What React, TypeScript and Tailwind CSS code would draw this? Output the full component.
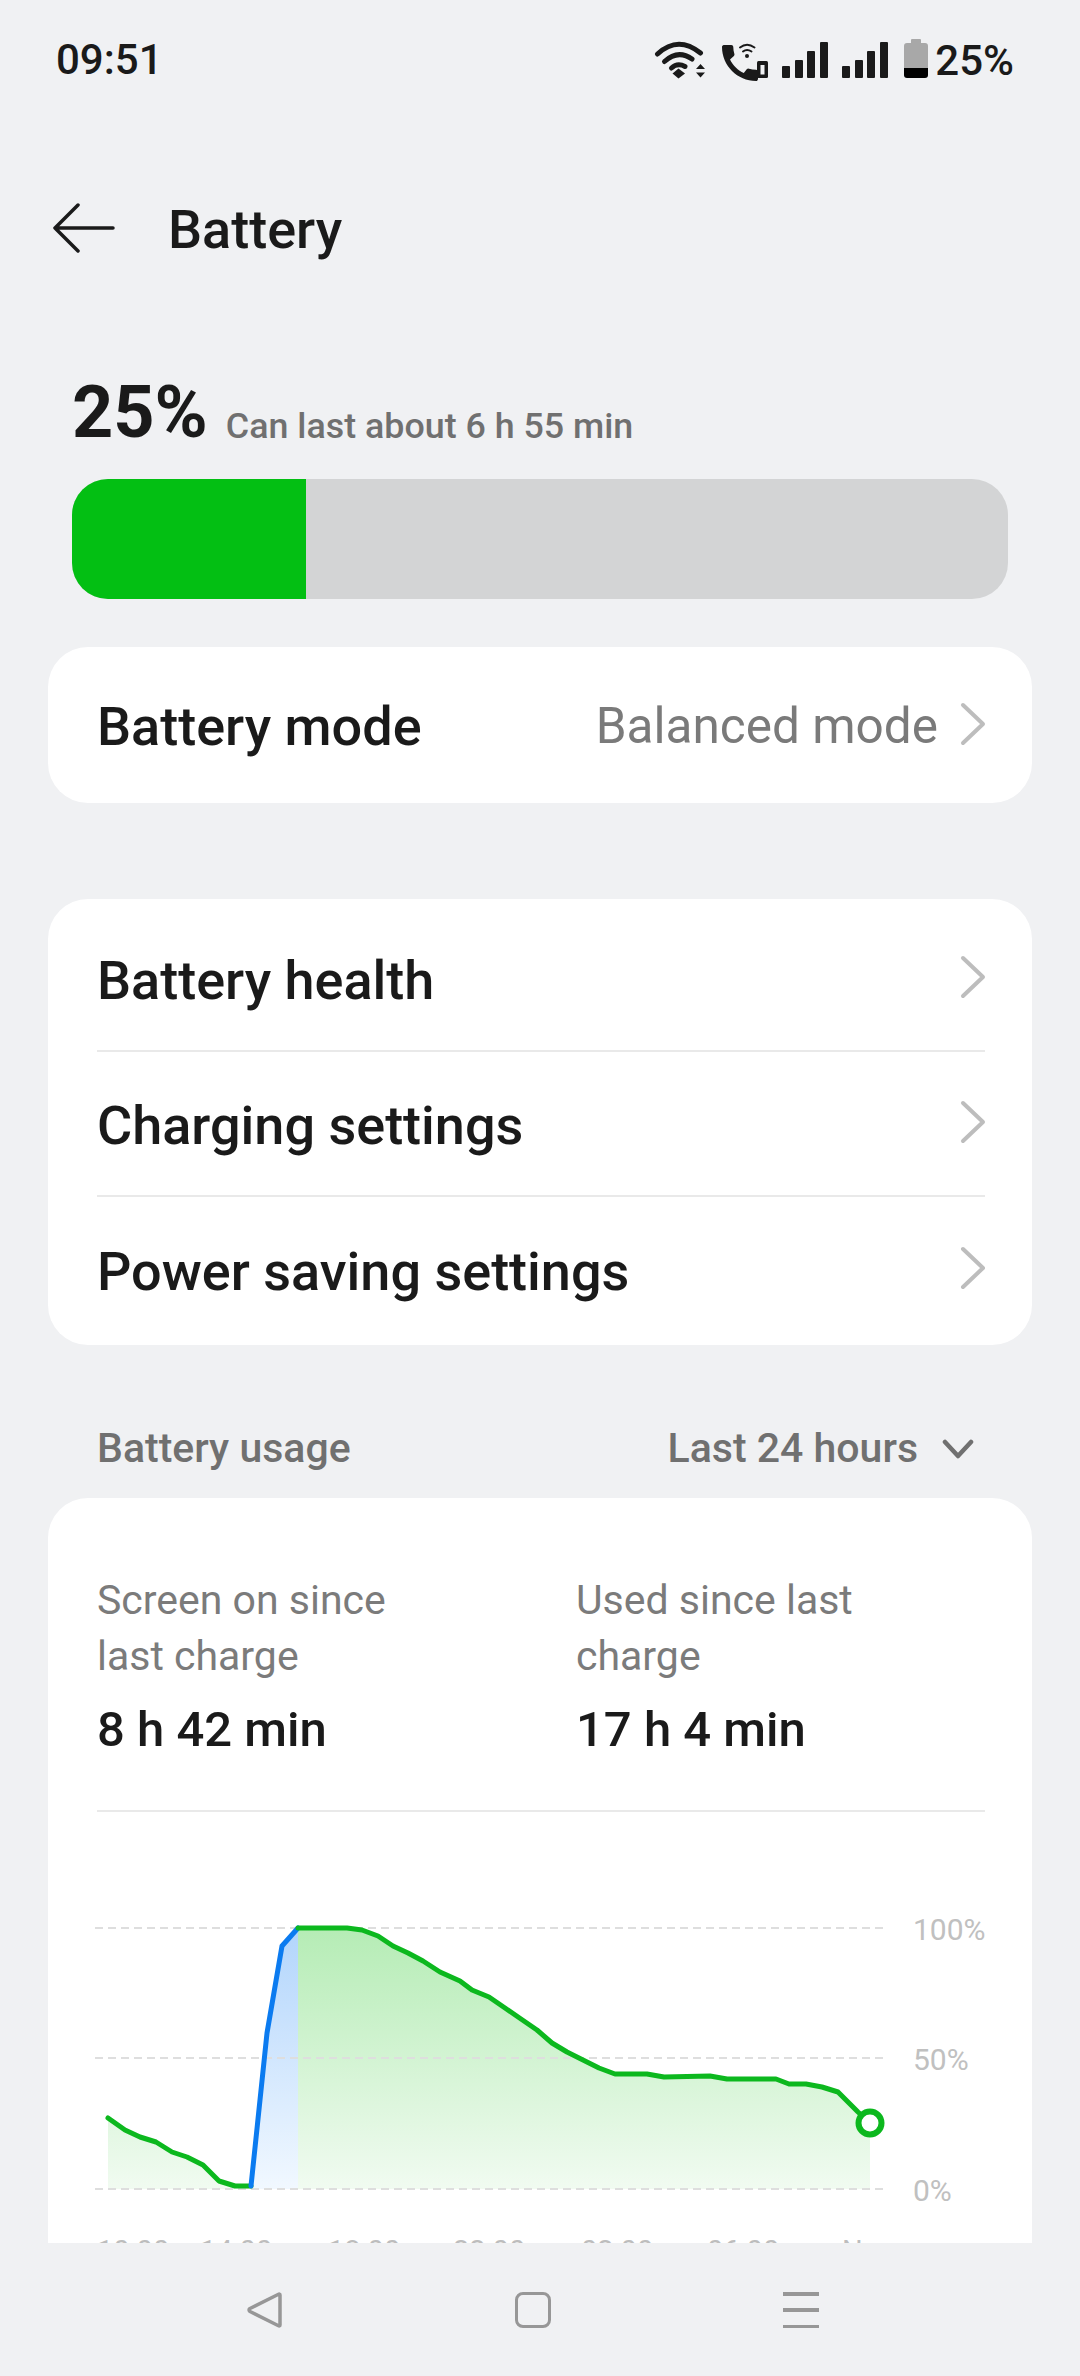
const green = [
  "298,1928", "347,1928", "362,1930", "378,1936", "393,1946", "408,1953", "423,1961", "440,1972", "460,1981",
  "472,1990", "489,1997", "505,2008", "521,2019", "537,2030", "552,2043", "567,2052", "583,2060", "599,2068",
  "615,2074", "647,2074", "664,2077", "710,2076", "727,2079", "776,2079", "789,2084", "806,2084", "822,2087",
  "838,2092", "858,2112", "870,2123",
].join(" ");
const greenStart = "108,2118 125,2130 140,2137 156,2142 172,2152 187,2157 203,2165 219,2181 235,2186 251,2186";
const blue = "251,2186 267,2033 282,1946 298,1928";

const axisTimes = [
  { label: "10:00", x: 97 },
  { label: "14:00", x: 200 },
  { label: "18:00", x: 328 },
  { label: "22:00", x: 453 },
  { label: "02:00", x: 581 },
  { label: "06:00", x: 707 },
  { label: "Now", x: 842 },
];

function Chevron() {
  return (
    <svg width="26" height="44" viewBox="0 0 26 44" fill="none" className="shrink-0 -mr-[1px] mb-[3px]">
      <path d="M3 3 L23 22 L3 41" stroke="#bdbdbd" strokeWidth="4" strokeLinecap="round" strokeLinejoin="round" />
    </svg>
  );
}

function StatusIcons() {
  return (
    <svg width="280" height="46" viewBox="650 36 280 46" fill="none">
      {/* wifi */}
      <g stroke="#1a1a1a" strokeWidth="5" strokeLinecap="round">
        <path d="M657.5 53 Q678 34 700.5 52" />
        <path d="M664.5 60.5 Q678 48 692 58" />
        <path d="M671.5 67 Q677.5 61.5 685 65.5" />
      </g>
      <path d="M678.5 67.5 L685 72.5 L678.5 77.5 L672.5 72.5 Z" fill="#1a1a1a" />
      <path d="M700.5 63 L705 68 L696 68 Z M700.5 76.5 L705 71.5 L696 71.5 Z" fill="#1a1a1a" />
      {/* call over wifi */}
      <path
        transform="translate(716 38) scale(2)"
        d="M20.01 15.38c-1.23 0-2.42-.2-3.53-.56a.977.977 0 0 0-1.01.24l-1.57 1.97c-2.83-1.35-5.48-3.9-6.89-6.83l1.95-1.66c.27-.28.35-.67.24-1.02-.37-1.11-.56-2.3-.56-3.53 0-.54-.45-.99-.99-.99H4.19C3.65 3 3 3.24 3 3.99 3 13.28 10.73 21 20.01 21c.71 0 .99-.63.99-1.18v-3.45c0-.54-.45-.99-.99-.99z"
        fill="#1a1a1a"
      />
      <g stroke="#1a1a1a" strokeWidth="2" strokeLinecap="round">
        <path d="M740 46.5 Q747 41 754.5 46.5" />
        <path d="M743 50.5 Q747 47.5 751.5 50.5" />
      </g>
      <circle cx="747" cy="55" r="2" fill="#1a1a1a" />
      <rect x="757" y="60" width="11" height="17" rx="1.5" fill="#1a1a1a" />
      <rect x="760.5" y="64" width="4" height="9.5" fill="#f0f1f3" />
      {/* signal */}
      <g fill="#1a1a1a">
        <rect x="782" y="65" width="8" height="12" rx="1" />
        <rect x="795" y="59" width="8" height="18" rx="1" />
        <rect x="807" y="50" width="8" height="27" rx="1" />
        <rect x="820" y="41" width="8" height="36" rx="1" />
        <rect x="842" y="65" width="8" height="12" rx="1" />
        <rect x="855" y="59" width="8" height="18" rx="1" />
        <rect x="867" y="50" width="8" height="27" rx="1" />
        <rect x="880" y="41" width="8" height="36" rx="1" />
      </g>
      {/* battery */}
      <path d="M904 45 a3 3 0 0 1 3 -3 h4 v-3 a1 1 0 0 1 1 -1 h8 a1 1 0 0 1 1 1 v3 h4 a3 3 0 0 1 3 3 v22 h-24 Z" fill="#a8a8a8" />
      <path d="M904 67 h24 v7 a3 3 0 0 1 -3 3 h-18 a3 3 0 0 1 -3 -3 Z" fill="#000" />
    </svg>
  );
}

function Row({ label, border }: { label: string; border?: boolean }) {
  return (
    <div className={`h-[145px] flex items-center justify-between ${border ? "border-b-2 border-[#e9e9e9]" : ""}`}>
      <span className="pt-[3px] text-[54px] font-medium text-[#1a1a1a]">{label}</span>
      <Chevron />
    </div>
  );
}

function UsageChart() {
  return (
    <svg width="984" height="460" viewBox="48 1812 984 460" fill="none" className="block">
      <defs>
        <linearGradient id="greenFill" gradientUnits="userSpaceOnUse" x1="0" y1="1928" x2="0" y2="2189">
          <stop offset="0" stopColor="#b5ecb5" />
          <stop offset="1" stopColor="#f1fbf1" />
        </linearGradient>
        <linearGradient id="blueFill" gradientUnits="userSpaceOnUse" x1="0" y1="1928" x2="0" y2="2189">
          <stop offset="0" stopColor="#b2d5fc" />
          <stop offset="1" stopColor="#f1f8ff" />
        </linearGradient>
      </defs>
      <polygon points={`108,2189 ${greenStart} 251,2189`} fill="url(#greenFill)" />
      <polygon points={`251,2189 ${blue} 298,2189`} fill="url(#blueFill)" />
      <polygon points={`298,2189 ${green} 870,2189`} fill="url(#greenFill)" />
      {[1928, 2058, 2189].map((y) => (
        <line key={y} x1="95" x2="883" y1={y} y2={y} stroke="#dedede" strokeWidth="2" strokeDasharray="8 5" />
      ))}
      <polyline points={greenStart} stroke="#0cb81e" strokeWidth="5" strokeLinejoin="round" strokeLinecap="round" />
      <polyline points={blue} stroke="#0b7bf0" strokeWidth="5" strokeLinejoin="round" strokeLinecap="round" />
      <polyline points={green} stroke="#0cb81e" strokeWidth="5" strokeLinejoin="round" strokeLinecap="round" />
      <circle cx="870" cy="2123" r="11.5" fill="#fff" stroke="#0cb81e" strokeWidth="6" />
      <g fill="#c0c0c0" fontSize="30">
        <text x="913" y="1940">100%</text>
        <text x="913" y="2070">50%</text>
        <text x="913" y="2201">0%</text>
      </g>
      <g fill="#bdbdbd" fontSize="29">
        {axisTimes.map((t) => (
          <text key={t.label} x={t.x} y="2261">{t.label}</text>
        ))}
      </g>
    </svg>
  );
}

export default function App() {
  return (
    <div className="w-[1080px] h-[2376px] flex flex-col overflow-hidden bg-[#f0f1f3] text-[#1a1a1a] [font-family:Roboto,sans-serif]">
      <main className="h-[2243px] overflow-hidden shrink-0">
        <div className="h-[116px] pt-[3px] flex items-center justify-between pl-[56px] pr-[66px]">
          <span className="text-[42px] font-medium">09:51</span>
          <div className="flex items-center gap-[5px]">
            <StatusIcons />
            <span className="pt-[1px] text-[42px] font-medium">25%</span>
          </div>
        </div>

        <div className="h-[224px] flex items-center pl-[53px]">
          <svg width="62" height="50" viewBox="0 0 62 50" fill="none" className="shrink-0">
            <path d="M25 2 L2 25 L25 48 M2 25 H60" stroke="#1a1a1a" strokeWidth="3.5" strokeLinecap="round" strokeLinejoin="round" />
          </svg>
          <h1 className="ml-[53px] pt-[2px] text-[54px] font-medium">Battery</h1>
        </div>

        <div className="mt-[37px] px-[72px]">
          <div className="flex items-end gap-[18px]">
            <span className="text-[72px] leading-none font-bold">25%</span>
            <span className="mb-[4px] text-[35.8px] leading-none font-medium text-[#707070]">Can last about 6 h 55 min</span>
          </div>
          <div className="mt-[30px] h-[120px] rounded-[36px] bg-[#d3d4d5] overflow-hidden">
            <div className="h-full w-[234px] bg-[#03bf13]" />
          </div>
        </div>

        <div className="mx-[48px] mt-[48px] h-[156px] rounded-[40px] bg-white pl-[49px] pr-[47px] flex items-center justify-between">
          <span className="pt-[3px] text-[54px] font-medium">Battery mode</span>
          <div className="flex items-center gap-[22px]">
            <span className="pt-[3px] text-[49.5px] text-[#7a7a7a]">Balanced mode</span>
            <Chevron />
          </div>
        </div>

        <div className="mx-[48px] mt-[96px] h-[446px] rounded-[40px] bg-white pl-[49px] pr-[47px] py-[8px]">
          <Row label="Battery health" border />
          <Row label="Charging settings" border />
          <Row label="Power saving settings" />
        </div>

        <div className="mx-[48px] mt-[74px] mb-[19px] h-[60px] pl-[49px] pr-[58px] flex items-center justify-between text-[#707070] text-[41px] font-medium">
          <span>Battery usage</span>
          <div className="flex items-center gap-[24px]">
            <span>Last 24 hours</span>
            <svg width="32" height="20" viewBox="0 0 32 20" fill="none">
              <path d="M3 3 L16 17 L29 3" stroke="#707070" strokeWidth="4.5" strokeLinecap="round" strokeLinejoin="round" />
            </svg>
          </div>
        </div>

        <div className="mx-[48px] h-[1000px] rounded-[40px] bg-white">
          <div className="pl-[49px] pr-[47px] pt-[74px]">
            <div className="grid grid-cols-[479px_1fr] pb-[50px] border-b-2 border-[#e9e9e9]">
              <div>
                <p className="text-[41px] leading-[56px] text-[#7b7b7b]">Screen on since<br />last charge</p>
                <p className="mt-[16px] text-[49px] leading-[60px] font-medium">8 h 42 min</p>
              </div>
              <div>
                <p className="text-[41px] leading-[56px] text-[#7b7b7b]">Used since last<br />charge</p>
                <p className="mt-[16px] text-[49px] leading-[60px] font-medium">17 h 4 min</p>
              </div>
            </div>
          </div>
          <UsageChart />
        </div>
      </main>

      <nav className="flex-1 flex items-start pt-[49px] pl-[247px] gap-[232px]">
        <svg width="36" height="36" viewBox="0 0 36 36" fill="none">
          <path d="M33 3 Q33 1.5 31 2.5 L3 16.5 Q1 18 3 19.5 L31 33.5 Q33 34.5 33 33 Z" stroke="#979797" strokeWidth="3.5" strokeLinejoin="round" />
        </svg>
        <div className="w-[36px] h-[36px] rounded-[8px] border-[3.5px] border-[#979797]" />
        <div className="w-[36px] h-[36px] flex flex-col justify-between">
          <div className="h-[3.5px] bg-[#979797]" />
          <div className="h-[3.5px] bg-[#979797]" />
          <div className="h-[3.5px] bg-[#979797]" />
        </div>
      </nav>
    </div>
  );
}
